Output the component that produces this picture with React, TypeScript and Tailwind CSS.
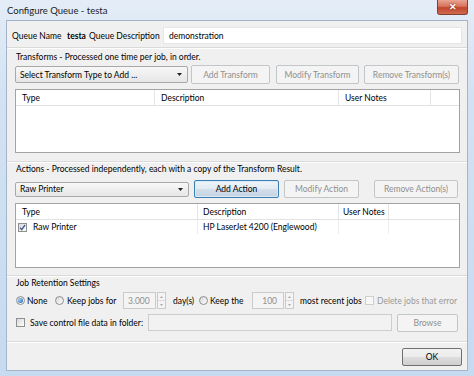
import React from 'react';

type BtnProps = { label: string; className: string; disabled?: boolean; primary?: boolean };

const Button: React.FC<BtnProps> = ({ label, className, disabled, primary }) => {
  let look = 'border-[#707070] bg-[linear-gradient(#f2f2f2_0%,#ebebeb_50%,#dddddd_50%,#cfcfcf_100%)] text-black';
  if (disabled) look = 'border-[#c3c6c8] bg-[#f4f4f4] text-[#8f8f8f]';
  if (primary)
    look =
      'border-[#3c7fb1] bg-[linear-gradient(#eef4f9_0%,#e2ebf3_50%,#d3dfea_50%,#c5d4e2_100%)] text-black shadow-[inset_0_0_0_1px_#d9e9f7]';
  return (
    <div className={`flex items-center justify-center rounded-[2px] border ${look} ${className}`}>{label}</div>
  );
};

const Combo: React.FC<{ label: string; className: string }> = ({ label, className }) => (
  <div
    className={`flex items-center justify-between rounded-[2px] border border-[#a9a9a9] bg-[linear-gradient(#f8f8f8,#e6e6e6)] pl-[4px] pr-[5px] ${className}`}
  >
    <span>{label}</span>
    <svg width="5" height="3" viewBox="0 0 5 3">
      <path d="M0 0h5L2.5 3z" fill="#222" />
    </svg>
  </div>
);

const Check: React.FC<{ checked?: boolean; disabled?: boolean }> = ({ checked, disabled }) => (
  <div
    className={`flex h-[9px] w-[9px] shrink-0 items-center justify-center border ${
      disabled ? 'border-[#cfcfcf] bg-[#f7f7f7]' : 'border-[#8e8f8f] bg-[linear-gradient(135deg,#d8d8d8,#ffffff)]'
    }`}
  >
    {checked && (
      <svg width="7" height="7" viewBox="0 0 7 7">
        <path d="M1 3.6l1.7 2L6 1" stroke="#3f5a8c" strokeWidth="1.3" fill="none" />
      </svg>
    )}
  </div>
);

const Radio: React.FC<{ on?: boolean }> = ({ on }) => (
  <div className="flex h-[9px] w-[9px] shrink-0 items-center justify-center rounded-full border border-[#8e8f8f] bg-[linear-gradient(135deg,#d6d6d6,#ffffff)]">
    {on && <div className="h-[5px] w-[5px] rounded-full bg-[radial-gradient(circle_at_35%_35%,#9fd0f5,#1d5aa6)]" />}
  </div>
);

const Spin: React.FC<{ value: string; className: string; right?: boolean }> = ({ value, className, right }) => (
  <div className="flex h-[17px] shrink-0 items-stretch">
    <div
      className={`flex items-center border border-[#cbcbcb] bg-[#f4f4f4] text-[#8d8d8d] ${
        right ? 'justify-end pr-[6px]' : 'pl-[4px]'
      } ${className}`}
    >
      {value}
    </div>
    <div className="ml-[1px] flex w-[9px] flex-col border border-[#cbcbcb] bg-[#f4f4f4]">
      <div className="flex flex-1 items-center justify-center border-b border-[#dcdcdc]">
        <svg width="3" height="2" viewBox="0 0 3 2">
          <path d="M0 2h3L1.5 0z" fill="#a8a8a8" />
        </svg>
      </div>
      <div className="flex flex-1 items-center justify-center">
        <svg width="3" height="2" viewBox="0 0 3 2">
          <path d="M0 0h3L1.5 2z" fill="#a8a8a8" />
        </svg>
      </div>
    </div>
  </div>
);

const Separator = () => <div className="h-[2px] border-t border-b border-t-[#dadada] border-b-white" />;

export default function App() {
  return (
    <div className="h-[376px] w-[474px] overflow-hidden whitespace-nowrap bg-[linear-gradient(180deg,#e4edf7_0%,#d3e2f3_25%,#c6daf0_100%)] px-[6px] pb-[5px] font-['Lato','Liberation_Sans',sans-serif] text-[8.5px] leading-[12px] text-black">
      {/* Title bar */}
      <div className="flex h-[20px] items-start justify-between">
        <span className="mt-[5px] ml-[1px] text-[9.5px] text-[#1b1b1b]">Configure Queue - testa</span>
        <div className="flex h-[15px] w-[31px] items-center justify-center rounded-b-[3px] border border-t-0 border-[#84402f] bg-[linear-gradient(#e9a492_0%,#d7745d_45%,#c2462c_55%,#cf6a4f_100%)] text-[9px] font-bold text-white [text-shadow:0_0_2px_#5a1d10]">
          ✕
        </div>
      </div>

      {/* Client */}
      <div className="flex h-[351px] flex-col border border-[#a5b5c9] bg-[#f0f0f0]">
        <div className="mt-[6px] flex h-[17px] items-center pl-[5px] pr-[5px]">
          <span className="w-[55px]">Queue Name</span>
          <span className="w-[22px] font-bold">testa</span>
          <span className="w-[74px]">Queue Description</span>
          <div className="flex h-[17px] flex-1 items-center border border-[#e6e6e6] bg-white pl-[5px]">demonstration</div>
        </div>

        <div className="mt-[3px]">
          <Separator />
        </div>

        {/* Transforms */}
        <div className="flex flex-col pl-[8px] pr-[7px]">
          <div className="mt-[2px] h-[12px] pl-[1px]">Transforms - Processed one time per job, in order.</div>
          <div className="mt-[2px] flex h-[19px] items-center">
            <Combo label="Select Transform Type to Add ..." className="h-[17px] w-[173px]" />
            <Button label="Add Transform" disabled className="ml-[3px] h-[19px] w-[79px]" />
            <Button label="Modify Transform" disabled className="ml-[6px] h-[19px] w-[83px]" />
            <Button label="Remove Transform(s)" disabled className="ml-[5px] h-[19px] w-[95px]" />
          </div>
          <div className="mt-[5px] h-[64px] border border-[#a3a3a3] bg-white">
            <div className="flex h-[16px] items-center border-b border-[#e2e2e2]">
              <div className="flex h-full w-[139px] items-center border-r border-[#e5e5e5] pl-[6px]">Type</div>
              <div className="flex h-full w-[184px] items-center border-r border-[#e5e5e5] pl-[6px]">Description</div>
              <div className="flex h-full w-[92px] items-center border-r border-[#e5e5e5] pl-[6px]">User Notes</div>
            </div>
          </div>
        </div>

        <div className="mt-[8px]">
          <Separator />
        </div>

        {/* Actions */}
        <div className="flex flex-col pl-[8px] pr-[7px]">
          <div className="h-[12px] pl-[1px]">Actions - Processed independently, each with a copy of the Transform Result.</div>
          <div className="mt-[5px] flex h-[18px] items-center">
            <Combo label="Raw Printer" className="h-[15px] w-[174px]" />
            <Button label="Add Action" primary className="ml-[5px] h-[18px] w-[85px]" />
            <Button label="Modify Action" disabled className="ml-[5px] h-[18px] w-[75px]" />
            <Button label="Remove Action(s)" disabled className="ml-[15px] h-[18px] w-[84px]" />
          </div>
          <div className="mt-[5px] h-[65px] border border-[#a3a3a3] bg-white">
            <div className="flex h-[16px] items-center border-b border-[#e2e2e2]">
              <div className="flex h-full w-[182px] items-center border-r border-[#e5e5e5] pl-[6px]">Type</div>
              <div className="flex h-full w-[141px] items-center border-r border-[#e5e5e5] pl-[5px]">Description</div>
              <div className="flex h-full w-[50px] items-center border-r border-[#e5e5e5] pl-[4px]">User Notes</div>
            </div>
            <div className="flex h-[14px] items-center">
              <div className="flex h-full w-[182px] items-center border-r border-[#eeeeee] pl-[2px]">
                <Check checked />
                <span className="ml-[6px]">Raw Printer</span>
              </div>
              <div className="flex h-full w-[141px] items-center border-r border-[#eeeeee] pl-[5px]">
                HP LaserJet 4200 (Englewood)
              </div>
              <div className="h-full w-[50px] border-r border-[#eeeeee]" />
            </div>
          </div>
        </div>

        <div className="mt-[7px]">
          <Separator />
        </div>

        {/* Job retention */}
        <div className="flex flex-col pl-[8px] pr-[7px]">
          <div className="h-[12px] pl-[1px]">Job Retention Settings</div>
          <div className="mt-[3px] flex h-[17px] items-center">
            <div className="ml-[1px]">
              <Radio on />
            </div>
            <span className="ml-[2px] w-[28px] shrink-0">None</span>
            <Radio />
            <span className="ml-[3px] w-[56px] shrink-0">Keep jobs for</span>
            <Spin value="3.000" className="w-[33px]" />
            <span className="ml-[7px] w-[26px] shrink-0">day(s)</span>
            <Radio />
            <span className="ml-[2px] w-[42px] shrink-0">Keep the</span>
            <Spin value="100" right className="w-[32px]" />
            <span className="ml-[6px] w-[65px] shrink-0">most recent jobs</span>
            <Check disabled />
            <span className="ml-[3px] text-[#9a9a9a]">Delete jobs that error</span>
          </div>
          <div className="mt-[5px] flex h-[17px] items-center">
            <div className="ml-[1px]">
              <Check />
            </div>
            <span className="ml-[5px] w-[118px] shrink-0">Save control file data in folder:</span>
            <div className="h-[17px] w-[244px] border border-[#cdcdcd] bg-[#f2f2f2]" />
            <Button label="Browse" disabled className="ml-[5px] h-[18px] w-[61px]" />
          </div>
        </div>

        <div className="mt-[10px]">
          <Separator />
        </div>

        <div className="mt-[5px] flex justify-end pr-[5px]">
          <Button label="OK" className="h-[18px] w-[60px]" />
        </div>
      </div>
    </div>
  );
}
